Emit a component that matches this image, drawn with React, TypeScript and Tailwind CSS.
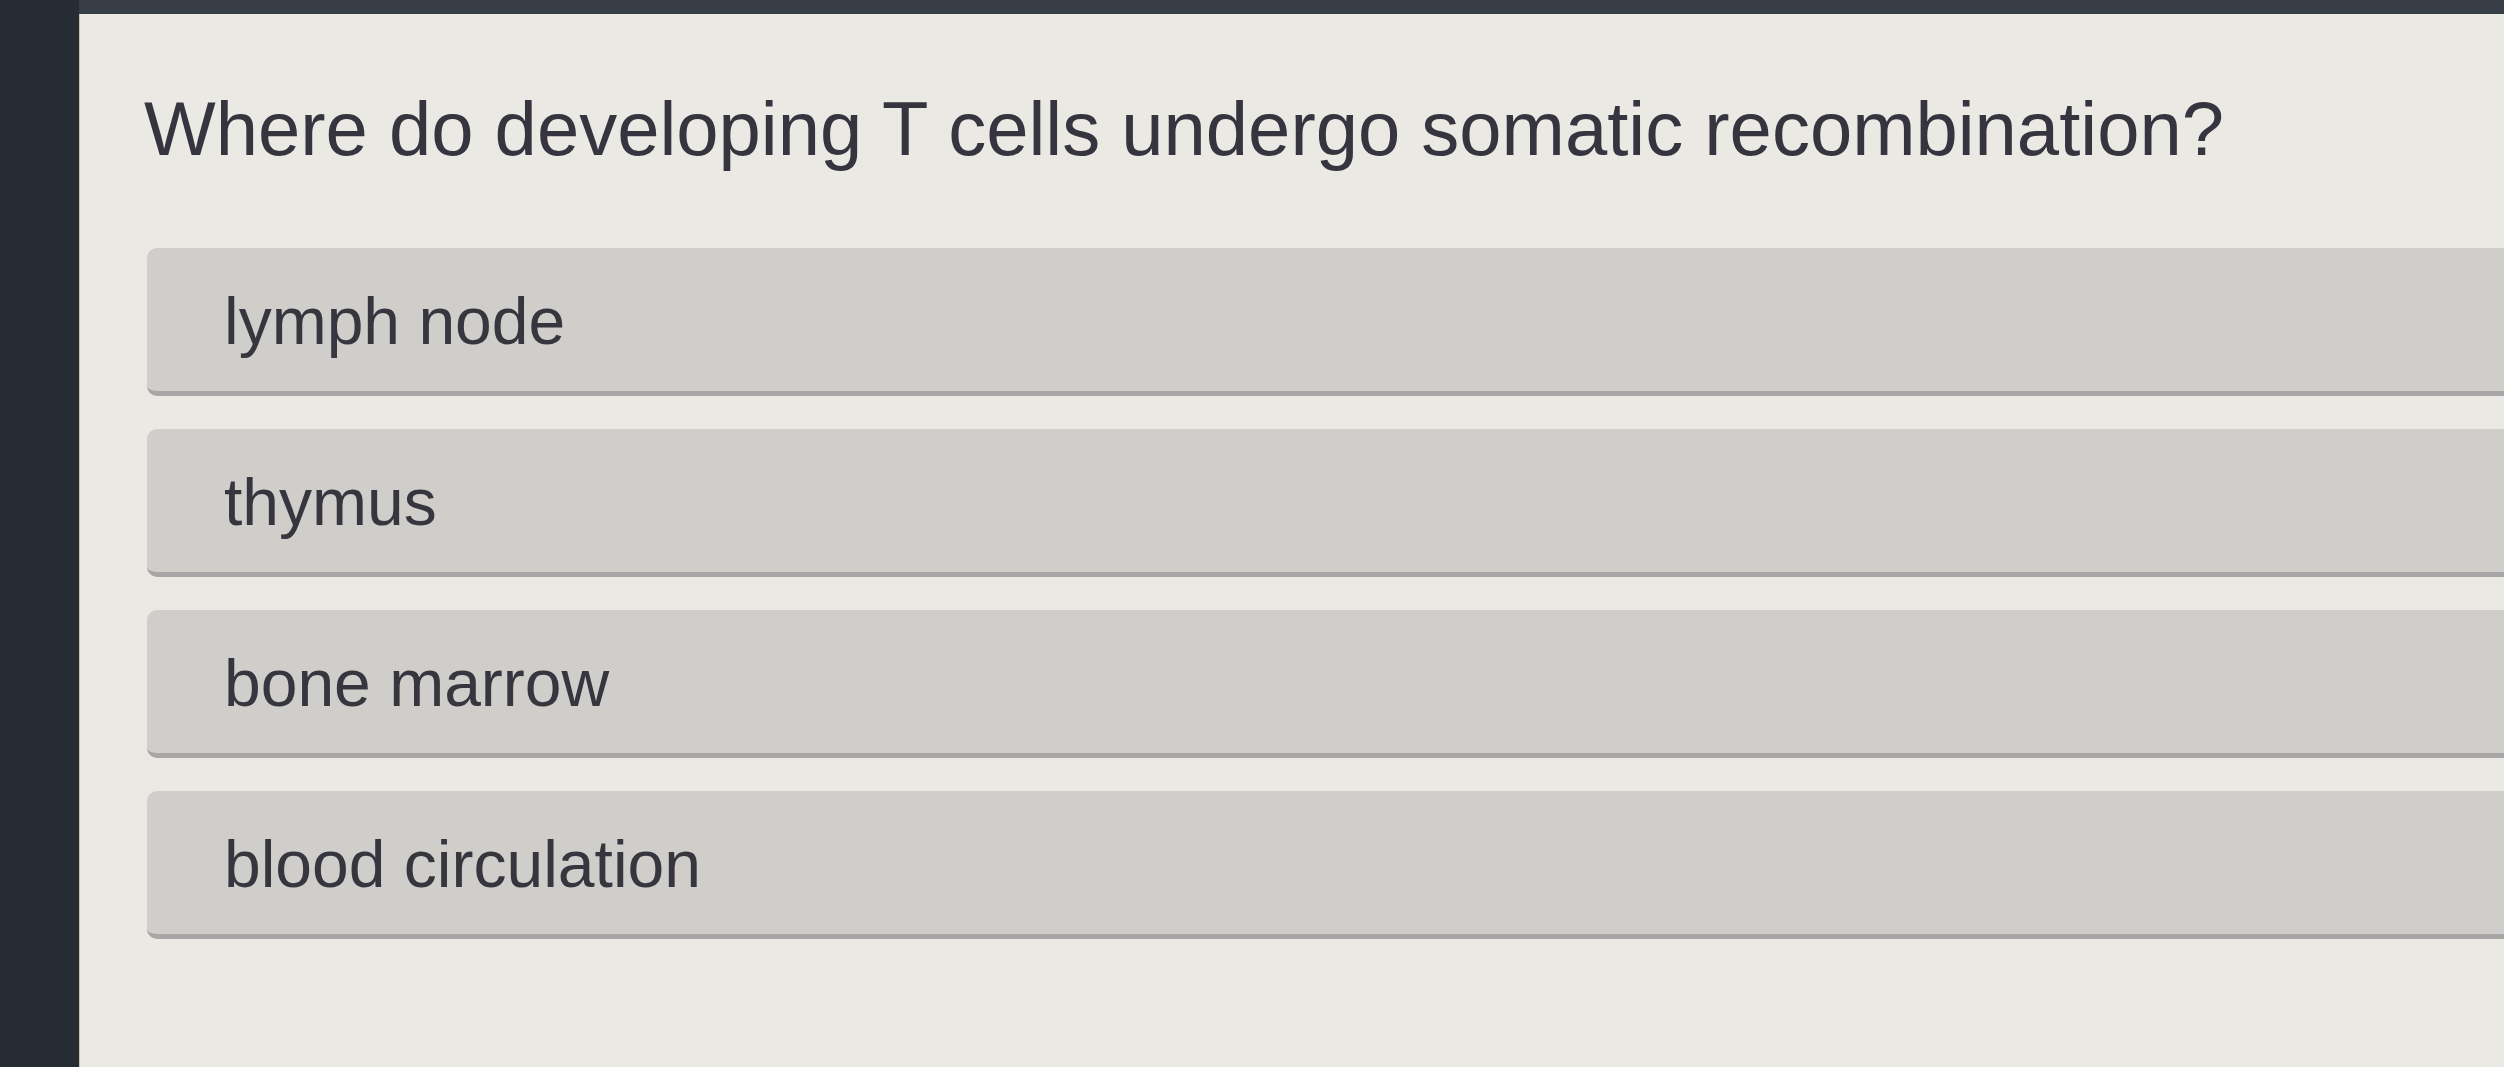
import React from 'react';

const options = ['lymph node', 'thymus', 'bone marrow', 'blood circulation'];

function OptionButton({ label }: { label: string }) {
  return (
    <button
      type="button"
      className="flex h-[148px] w-full items-center rounded-l-[10px] border-b-[5px] border-[#a8a6a7] bg-[#d0cecb] pl-[77px] pt-[3px] text-left text-[66px] leading-none text-[#37363f]"
    >
      {label}
    </button>
  );
}

export default function App() {
  return (
    <div
      className="flex h-[1067px] w-full overflow-hidden bg-[#363d45]"
      style={{ fontFamily: '"Liberation Sans", Arial, sans-serif' }}
    >
      {/* screen bezel */}
      <div className="w-[79px] shrink-0 bg-[#262c33]" />

      {/* quiz panel */}
      <div className="mt-[14px] flex flex-1 flex-col overflow-hidden border-l border-[#cdbfae] bg-[#ebe9e4] pl-[64px] pt-[71px]">
        <h1 className="whitespace-nowrap text-[76px] font-normal leading-[1.15] text-[#35343f]">
          Where do developing T cells undergo somatic recombination?
        </h1>

        <div className="ml-[3px] mt-[76px] flex flex-col gap-[33px]">
          {options.map((o) => (
            <OptionButton key={o} label={o} />
          ))}
        </div>
      </div>
    </div>
  );
}
